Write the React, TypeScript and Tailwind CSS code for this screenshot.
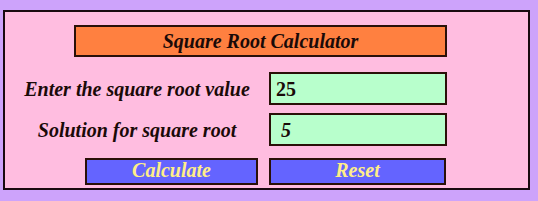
export default function App() {
    return (
        <div className="font-bold italic">
            <div className="font-[Liberation_Serif] w-[538px] h-[201px] bg-[#cda3fb] pt-[10px] pl-[3px]">
                <div className="w-[527px] h-[180px] bg-[#ffbde0] border-2 border-[#1a0a10] flex flex-col">
                    <div className="mt-[13px] ml-[69px] w-[373px] h-[32px] bg-[#ff8040] border-2 border-[#2a1008] flex items-center justify-center text-[20px] text-[#1a0a08]">
                        Square Root Calculator
                    </div>

                    <div className="mt-[15px] flex items-center">
                        <div className="w-[264px] text-center text-[20px] text-[#1a0a08]">
                            Enter the square root value
                        </div>
                        <div className="w-[178px] h-[33px] bg-[#b8ffcc] border-2 border-[#2a1008] flex items-center pl-[5px] text-[20px] text-[#1a0a08] not-italic">
                            25
                        </div>
                    </div>

                    <div className="mt-[8px] flex items-center">
                        <div className="w-[264px] text-center text-[20px] text-[#1a0a08]">
                            Solution for square root
                        </div>
                        <div className="w-[178px] h-[33px] bg-[#b8ffcc] border-2 border-[#2a1008] flex items-center pl-[10px] text-[20px] text-[#1a0a08]">
                            5
                        </div>
                    </div>

                    <div className="mt-[12px] flex">
                        <div className="ml-[80px] w-[173px] h-[27px] bg-[#6464ff] border-2 border-[#2a1008] flex justify-center text-[20px] leading-[20px] text-[#ffee88]">
                            Calculate
                        </div>
                        <div className="ml-[11px] w-[177px] h-[27px] bg-[#6464ff] border-2 border-[#2a1008] flex justify-center text-[20px] leading-[20px] text-[#ffee88]">
                            Reset
                        </div>
                    </div>
                </div>
            </div>
        </div>
    );
}
